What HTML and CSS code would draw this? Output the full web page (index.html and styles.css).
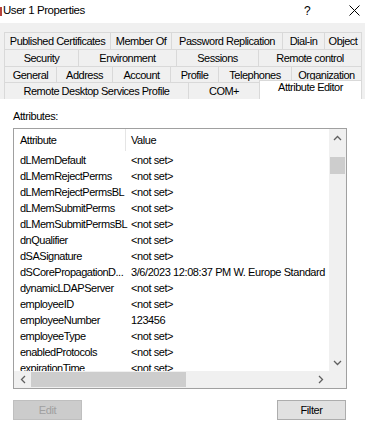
FILE: index.html
```html
<!DOCTYPE html>
<html>
<head>
    <meta charset="utf-8">
    <title>User 1 Properties</title>
    <link rel="stylesheet" href="styles.css">
</head>
<body>
<div class="dialog">
    <div class="titlebar">
        <span class="app-icon"></span>
        <span class="title">User 1 Properties</span>
        <span class="help">?</span>
        <span class="close">
            <svg width="11" height="11" viewBox="0 0 11 11"><path d="M0.5 0.5 L10.5 10.5 M10.5 0.5 L0.5 10.5" stroke="#000" stroke-width="1"/></svg>
        </span>
    </div>

    <div class="tabs">
        <div class="tab-row r1">
            <span class="tab" style="width:106px">Published Certificates</span>
            <span class="tab" style="width:61px">Member Of</span>
            <span class="tab" style="width:111px">Password Replication</span>
            <span class="tab" style="width:42px">Dial-in</span>
            <span class="tab" style="width:38px">Object</span>
        </div>
        <div class="tab-row r2">
            <span class="tab" style="width:74px">Security</span>
            <span class="tab" style="width:98px">Environment</span>
            <span class="tab" style="width:82px">Sessions</span>
            <span class="tab" style="width:104px">Remote control</span>
        </div>
        <div class="tab-row r3">
            <span class="tab" style="width:52px">General</span>
            <span class="tab" style="width:56px">Address</span>
            <span class="tab" style="width:58px">Account</span>
            <span class="tab" style="width:48px">Profile</span>
            <span class="tab" style="width:73px">Telephones</span>
            <span class="tab" style="width:71px">Organization</span>
        </div>
        <div class="tab-row r4">
            <span class="tab" style="width:184px">Remote Desktop Services Profile</span>
            <span class="tab" style="width:71px">COM+</span>
            <span class="tab active" style="width:103px">Attribute Editor</span>
        </div>
    </div>

    <div class="page">
        <div class="label">Attributes:</div>
        <div class="listbox">
            <div class="list-main">
                <div class="list-view">
                    <div class="list-head">
                        <span class="col-a">Attribute</span>
                        <span class="col-v">Value</span>
                    </div>
                    <div class="list-rows">
                        <div class="row"><span class="col-a">dLMemDefault</span><span class="col-v">&lt;not set&gt;</span></div>
                        <div class="row"><span class="col-a">dLMemRejectPerms</span><span class="col-v">&lt;not set&gt;</span></div>
                        <div class="row"><span class="col-a">dLMemRejectPermsBL</span><span class="col-v">&lt;not set&gt;</span></div>
                        <div class="row"><span class="col-a">dLMemSubmitPerms</span><span class="col-v">&lt;not set&gt;</span></div>
                        <div class="row"><span class="col-a">dLMemSubmitPermsBL</span><span class="col-v">&lt;not set&gt;</span></div>
                        <div class="row"><span class="col-a">dnQualifier</span><span class="col-v">&lt;not set&gt;</span></div>
                        <div class="row"><span class="col-a">dSASignature</span><span class="col-v">&lt;not set&gt;</span></div>
                        <div class="row"><span class="col-a">dSCorePropagationD...</span><span class="col-v">3/6/2023 12:08:37 PM W. Europe Standard</span></div>
                        <div class="row"><span class="col-a">dynamicLDAPServer</span><span class="col-v">&lt;not set&gt;</span></div>
                        <div class="row"><span class="col-a">employeeID</span><span class="col-v">&lt;not set&gt;</span></div>
                        <div class="row"><span class="col-a">employeeNumber</span><span class="col-v">123456</span></div>
                        <div class="row"><span class="col-a">employeeType</span><span class="col-v">&lt;not set&gt;</span></div>
                        <div class="row"><span class="col-a">enabledProtocols</span><span class="col-v">&lt;not set&gt;</span></div>
                        <div class="row"><span class="col-a">expirationTime</span><span class="col-v">&lt;not set&gt;</span></div>
                    </div>
                </div>
                <div class="vscroll">
                    <span class="arrow">
                        <svg width="9" height="6" viewBox="0 0 9 6"><path d="M1 5 L4.5 1.5 L8 5" fill="none" stroke="#606060" stroke-width="1.3"/></svg>
                    </span>
                    <span class="vtrack"><span class="vthumb"></span></span>
                    <span class="arrow">
                        <svg width="9" height="6" viewBox="0 0 9 6"><path d="M1 1 L4.5 4.5 L8 1" fill="none" stroke="#606060" stroke-width="1.3"/></svg>
                    </span>
                </div>
            </div>
            <div class="hscroll">
                <span class="arrow">
                    <svg width="6" height="9" viewBox="0 0 6 9"><path d="M5 1 L1.5 4.5 L5 8" fill="none" stroke="#606060" stroke-width="1.3"/></svg>
                </span>
                <span class="htrack"><span class="hthumb"></span></span>
                <span class="arrow">
                    <svg width="6" height="9" viewBox="0 0 6 9"><path d="M1 1 L4.5 4.5 L1 8" fill="none" stroke="#606060" stroke-width="1.3"/></svg>
                </span>
                <span class="corner"></span>
            </div>
        </div>

        <div class="buttons">
            <button class="btn disabled">Edit</button>
            <button class="btn">Filter</button>
        </div>
    </div>
</div>
</body>
</html>
```

FILE: styles.css
```css
html, body {
    margin: 0;
    padding: 0;
    background: #fff;
}

body {
    width: 365px;
    height: 435px;
    overflow: hidden;
    font: 11px/1 'Liberation Sans', Arial, sans-serif;
    letter-spacing: -0.42px;
    color: #000;
    cursor: default
}

.dialog {
    display: flex;
    flex-direction: column;
    height: 435px;
}

/* title bar */
.titlebar {
    display: flex;
    align-items: center;
    height: 23px;
    background: #fff;
}

.app-icon {
    width: 2px;
    height: 9px;
    background: #b5423c;
    margin-top: -1px;
}

.title {
    font-size: 11.5px;
    letter-spacing: -0.45px;
    margin-left: 1px;
    margin-top: -2px;
    flex: 1;
}

.help {
    font-size: 12px;
    width: 12px;
    margin-top: -2px;
    margin-right: 33px;
}

.close {
    display: flex;
    margin-right: 5px;
    margin-top: -2px;
}

/* tabs */
.tabs {
    background: #f0f0f0;
    padding: 9px 0 0 4px;
    letter-spacing: -0.5px;
}

.tab-row {
    display: flex;
    height: 17px;
}

.tab-row.r3 {
    height: 16px;
}

.tab {
    display: flex;
    align-items: center;
    justify-content: center;
    box-sizing: border-box;
    border-top: 1px solid #d9d9d9;
    border-left: 1px solid #d9d9d9;
    background: #f0f0f0;
    white-space: nowrap;
    padding-top: 1px;
}

.tab:last-child {
    border-right: 1px solid #d9d9d9;
}

.tab.active {
    background: #fff;
    margin-top: -2px;
    height: 19px;
    padding-top: 0;
    padding-bottom: 5px;
    position: relative;
}

/* page */
.page {
    flex: 1;
    background: #fff;
    padding: 12px 0 0 13px;
}

.label {
    height: 17px;
    line-height: 11px;
}

.listbox {
    width: 334px;
    height: 261px;
    box-sizing: border-box;
    border: 1px solid #a0a0a0;
    display: flex;
    flex-direction: column;
}

.list-main {
    display: flex;
    flex: 1;
    min-height: 0;
}

.list-view {
    flex: 1;
    overflow: hidden;
    display: flex;
    flex-direction: column;
}

.list-head {
    display: flex;
    height: 22px;
    align-items: center;
    flex: none;
}

.list-head .col-a {
    border-right: 1px solid #e5e5e5;
    height: 22px;
    line-height: 22px;
    box-sizing: border-box;
}

.list-rows {
    flex: 1;
    overflow: hidden;
    padding-top: 1px;
}

.row {
    display: flex;
    height: 16px;
    align-items: center;
    white-space: nowrap;
}

.col-a {
    width: 112px;
    flex: none;
    padding-left: 6px;
    box-sizing: border-box;
    letter-spacing: -0.5px;
}

.col-v {
    padding-left: 5px;
    white-space: nowrap;
}

/* scrollbars */
.vscroll {
    width: 17px;
    flex: none;
    background: #f0f0f0;
    display: flex;
    flex-direction: column;
}

.vscroll .arrow {
    height: 17px;
    display: flex;
    align-items: center;
    justify-content: center;
}

.vtrack {
    flex: 1;
    padding: 11px 1px 0;
}

.vthumb {
    display: block;
    height: 17px;
    background: #cdcdcd;
}

.hscroll {
    height: 17px;
    flex: none;
    background: #f0f0f0;
    display: flex;
}

.hscroll .arrow {
    width: 17px;
    display: flex;
    align-items: center;
    justify-content: center;
}

.htrack {
    flex: 1;
    padding: 1px 0;
    display: flex;
}

.hthumb {
    display: block;
    width: 155px;
    background: #cdcdcd;
}

.corner {
    width: 17px;
    background: #f0f0f0;
}

/* buttons */
.buttons {
    display: flex;
    justify-content: space-between;
    width: 333px;
    margin-top: 11px;
}

.btn {
    width: 69px;
    height: 20px;
    font: inherit;
    letter-spacing: inherit;
    background: #e1e1e1;
    border: 1px solid #adadad;
    color: #000;
    padding: 0;
}

.btn.disabled {
    background: #cccccc;
    border-color: #bfbfbf;
    color: #a0a0a0;
}
```
